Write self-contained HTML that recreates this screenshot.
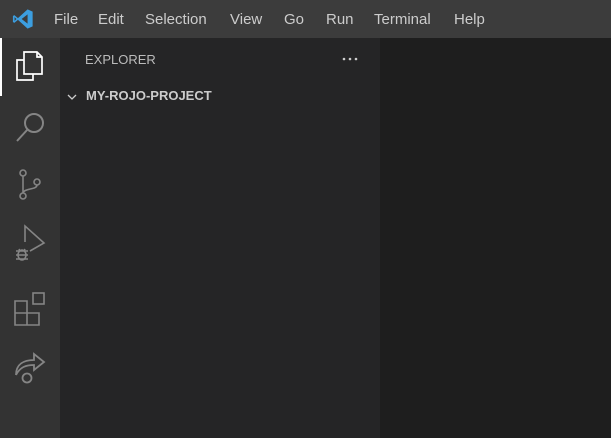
<!DOCTYPE html>
<html><head><meta charset="utf-8"><style>
*{margin:0;padding:0;box-sizing:border-box}
body{width:611px;height:438px;overflow:hidden;background:#1e1e1e;font-family:"Segoe UI","Liberation Sans",sans-serif;position:relative}
#title{position:absolute;left:0;top:0;width:611px;height:38px;background:#3c3c3c}
#title span{position:absolute;top:11px;font-size:15px;color:#cccccc}
#act{position:absolute;left:0;top:38px;width:60px;height:400px;background:#333333}
#side{position:absolute;left:60px;top:38px;width:320px;height:400px;background:#252526}
.ic{position:absolute;left:0;width:60px;height:60px}
</style></head><body>
<div id="title">
<svg style="position:absolute;left:12px;top:8px" width="22" height="22" viewBox="0 0 24 24"><path d="M17 1.5 L22.5 4 V20 L17 22.5 L6.5 13 L2.5 16.2 L1 15.3 V8.7 L2.5 7.8 L6.5 11 Z M17 7 L10.5 12 L17 17 Z M2.8 10 V14 L4.8 12 Z" fill="#3c9ee0" fill-rule="evenodd"/></svg>
<span style="left:54px">File</span>
<span style="left:98px">Edit</span>
<span style="left:145px">Selection</span>
<span style="left:230px">View</span>
<span style="left:284px">Go</span>
<span style="left:326px">Run</span>
<span style="left:374px">Terminal</span>
<span style="left:454px">Help</span>
</div>
<div id="act">
<div style="position:absolute;left:0;top:0;width:2px;height:58px;background:#fff"></div>
<svg class="ic" style="top:0" viewBox="0 0 60 60" fill="none" stroke="#fff" stroke-width="1.7"><path d="M24 22 H17 V42 H33 V36"/><path d="M24 14 H37 L42 19 V36 H24 Z"/><path d="M37 14 V19 H42"/></svg>
<svg class="ic" style="top:60px" viewBox="0 0 60 60" fill="none" stroke="#858585" stroke-width="2"><circle cx="34" cy="25" r="9"/><path d="M27.5 31.5 L17 43"/></svg>
<svg class="ic" style="top:120px" viewBox="0 0 60 60" fill="none" stroke="#858585" stroke-width="1.6"><circle cx="23" cy="15" r="3"/><circle cx="37" cy="24" r="3"/><circle cx="23" cy="38" r="3"/><path d="M23 18 V35"/><path d="M37 27 C37 32 24 30 23 35"/></svg>
<svg class="ic" style="top:180px" viewBox="0 0 60 60" fill="none" stroke="#858585" stroke-width="1.6"><path d="M25 24 V8 L44 25 L30 33"/><ellipse cx="22" cy="37" rx="4" ry="5"/><path d="M16 33 H28 M16 37 H28 M16 41 H28 M19 31 L20 33 M25 31 L24 33"/></svg>
<svg class="ic" style="top:240px" viewBox="0 0 60 60" fill="none" stroke="#858585" stroke-width="1.6"><path d="M15 23 H27 V47 H15 Z M15 35 H39 V47 H27"/><rect x="33" y="15" width="11" height="11"/></svg>
<svg class="ic" style="top:300px" viewBox="0 0 60 60" fill="none" stroke="#858585" stroke-width="1.8"><path d="M16 37 C16 26 24 22 34 22 V16 L44 24 L34 32 V27 C26 27 20 29 16 37"/><circle cx="27" cy="40" r="4.5"/></svg>
</div>
<div id="side">
<div style="position:absolute;left:25px;top:14px;font-size:13px;color:#bbbbbb">EXPLORER</div>
<svg style="position:absolute;left:282px;top:19px" width="16" height="4" viewBox="0 0 16 4" fill="#cccccc"><circle cx="2" cy="2" r="1.3"/><circle cx="8" cy="2" r="1.3"/><circle cx="14" cy="2" r="1.3"/></svg>
<svg style="position:absolute;left:6px;top:53px" width="12" height="12" viewBox="0 0 12 12" fill="none" stroke="#cccccc" stroke-width="1.3"><path d="M2 4 L6 8 L10 4"/></svg>
<div style="position:absolute;left:26px;top:50px;font-size:13px;font-weight:bold;color:#cccccc">MY-ROJO-PROJECT</div>
</div>
</body></html>
